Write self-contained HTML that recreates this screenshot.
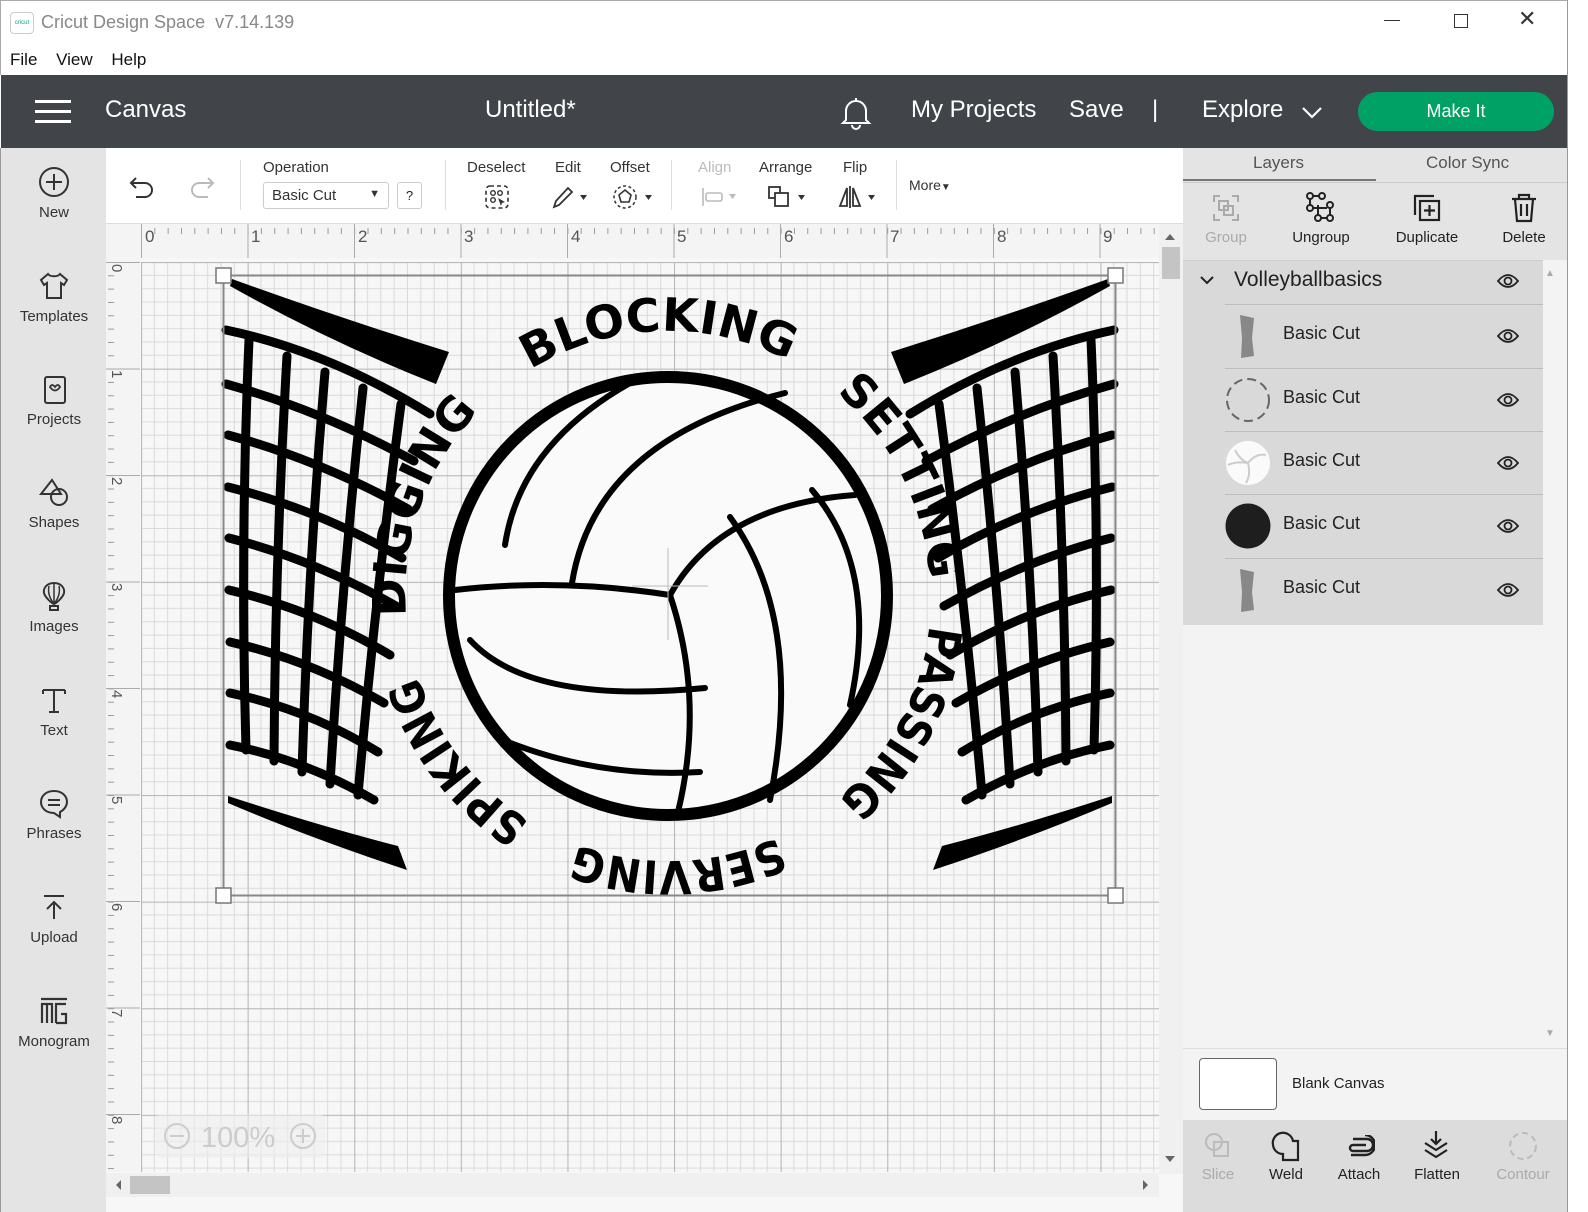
<!DOCTYPE html>
<html><head><meta charset="utf-8"><style>
*{margin:0;padding:0;box-sizing:border-box}
body{width:1588px;height:1212px;background:#fff;font-family:"Liberation Sans",sans-serif;position:relative;overflow:hidden;color:#222}
.abs{position:absolute}
.side{left:0;top:148px;width:106px;height:1064px;background:#e4e4e4;border-left:1px solid #999}
.si{position:absolute;left:0;width:106px;text-align:center;font-size:15px;color:#333}
.si svg{display:block;margin:0 auto 6px}
.tb{left:106px;top:148px;width:1077px;height:76px;background:#fff}
.tl{position:absolute;font-size:15px;color:#333}
.rp{left:1183px;top:148px;width:384px;height:1064px;background:#f3f3f3}
.lrow{position:absolute;left:42px;width:318px;height:63px;border-top:1px solid #bdbdbd}
.lrow span{position:absolute;left:58px;top:18px;font-size:18px;color:#222}
.eye{position:absolute;left:272px}
.bt{position:absolute;text-align:center;font-size:15px;width:80px}
</style></head><body>
<div class="abs" style="left:0;top:0;width:1568px;height:75px;border:1px solid #aaa;border-bottom:none;background:#fff"></div>
<div class="abs" style="left:10px;top:12px;width:24px;height:22px;border:1px solid #ccc;border-radius:4px;font-size:6px;color:#0a8;text-align:center;line-height:20px">cricut</div>
<div class="abs" style="left:41px;top:12px;font-size:18px;color:#888">Cricut Design Space&nbsp; v7.14.139</div>
<div class="abs" style="left:1384px;top:20px;width:16px;height:1px;background:#333"></div>
<div class="abs" style="left:1454px;top:14px;width:14px;height:14px;border:1px solid #333"></div>
<div class="abs" style="left:1518px;top:6px;font-size:22px;color:#333">✕</div>
<div class="abs" style="left:10px;top:50px;font-size:17px;color:#111;word-spacing:14px">File View Help</div>
<div class="abs" style="left:1px;top:75px;width:1566px;height:73px;background:#414549"></div>
<div class="abs" style="left:35px;top:100px;width:36px;height:3px;background:#fff;box-shadow:0 10px 0 #fff,0 20px 0 #fff"></div>
<div class="abs" style="left:105px;top:96px;font-size:24px;color:#fff">Canvas</div>
<div class="abs" style="left:485px;top:96px;font-size:24px;color:#fff">Untitled*</div>
<svg class="abs" style="left:840px;top:96px" width="32" height="34" viewBox="0 0 32 34"><path d="M6 24V15a10 10 0 0 1 20 0v9l3 3H3z M12 29a4 4 0 0 0 8 0" fill="none" stroke="#fff" stroke-width="2"/><path d="M16 2v3" stroke="#fff" stroke-width="2"/></svg>
<div class="abs" style="left:911px;top:96px;font-size:24px;color:#fff">My Projects</div>
<div class="abs" style="left:1069px;top:96px;font-size:24px;color:#fff">Save</div>
<div class="abs" style="left:1152px;top:96px;font-size:24px;color:#fff">|</div>
<div class="abs" style="left:1202px;top:96px;font-size:24px;color:#fff">Explore</div>
<svg class="abs" style="left:1300px;top:104px" width="24" height="16"><path d="M3 4l9 9 9-9" fill="none" stroke="#fff" stroke-width="2.2"/></svg>
<div class="abs" style="left:1358px;top:92px;width:196px;height:39px;background:#00a164;border-radius:20px;color:#fff;font-size:18px;text-align:center;line-height:38px">Make It</div>
<div class="abs side">
<div class="si" style="top:18px"><svg width="32" height="32"><circle cx="16" cy="16" r="14" fill="none" stroke="#333" stroke-width="2"/><path d="M16 8v16M8 16h16" stroke="#333" stroke-width="2"/></svg>New</div>
<div class="si" style="top:122px"><svg width="32" height="32"><path d="M10 4l-7 6 3 5 3-2v15h14V13l3 2 3-5-7-6c-2 3-10 3-12 0z" fill="none" stroke="#333" stroke-width="2"/></svg>Templates</div>
<div class="si" style="top:225px"><svg width="32" height="32"><rect x="7" y="4" width="20" height="26" rx="2" fill="none" stroke="#333" stroke-width="2"/><path d="M12 14q5 7 10 0q-2-4-5 0q-3-4-5 0z" fill="none" stroke="#333" stroke-width="1.8"/></svg>Projects</div>
<div class="si" style="top:328px"><svg width="32" height="32"><path d="M14 4L3 18h20z" fill="none" stroke="#333" stroke-width="2"/><circle cx="21" cy="21" r="8" fill="none" stroke="#333" stroke-width="2"/></svg>Shapes</div>
<div class="si" style="top:432px"><svg width="32" height="32"><path d="M16 3c-7 0-11 5-10 10 1 4 7 10 10 11 3-1 9-7 10-11 1-5-3-10-10-10zM12 26h8v4h-8z" fill="none" stroke="#333" stroke-width="2"/><path d="M16 4v20M11 6q-2 9 5 18M21 6q2 9-5 18" fill="none" stroke="#333" stroke-width="1.5"/></svg>Images</div>
<div class="si" style="top:536px"><svg width="32" height="32"><path d="M5 6h22M16 6v22M11 28h10M5 6v4M27 6v4" stroke="#333" stroke-width="2" fill="none"/></svg>Text</div>
<div class="si" style="top:639px"><svg width="32" height="32"><path d="M16 4C8 4 3 9 3 15s5 11 13 11l6 4v-5c4-2 7-6 7-10 0-6-5-11-13-11z" fill="none" stroke="#333" stroke-width="2"/><path d="M10 13h12M10 18h12" stroke="#333" stroke-width="2"/></svg>Phrases</div>
<div class="si" style="top:743px"><svg width="32" height="32"><path d="M6 5h20M16 28V11M9 18l7-7 7 7" fill="none" stroke="#333" stroke-width="2"/></svg>Upload</div>
<div class="si" style="top:847px"><svg width="32" height="32"><path d="M3 4h26M4 28V9h10v19M9 9v19M18 28V9h10M18 28h10v-9h-5" fill="none" stroke="#333" stroke-width="2.2"/></svg>Monogram</div>
</div>
<div class="abs tb">
<svg class="abs" style="left:22px;top:26px" width="30" height="26"><path d="M8 4L3 9l5 5M3 9h14a7 7 0 0 1 0 14H8" fill="none" stroke="#333" stroke-width="2"/></svg>
<svg class="abs" style="left:80px;top:26px" width="30" height="26"><path d="M22 4l5 5-5 5M27 9H13a7 7 0 0 0 0 14h9" fill="none" stroke="#bbb" stroke-width="2"/></svg>
<div class="abs" style="left:134px;top:12px;width:1px;height:50px;background:#ddd"></div>
<div class="tl" style="left:157px;top:11px">Operation</div>
<div class="abs" style="left:157px;top:34px;width:126px;height:27px;border:1px solid #ccc;border-radius:3px;font-size:15px;padding:4px 8px;color:#333">Basic Cut<span style="position:absolute;right:8px;top:5px;font-size:11px">▼</span></div>
<div class="abs" style="left:291px;top:34px;width:25px;height:27px;border:1px solid #ccc;border-radius:3px;font-size:13px;text-align:center;line-height:25px">?</div>
<div class="abs" style="left:339px;top:12px;width:1px;height:50px;background:#ddd"></div>
<div class="tl" style="left:361px;top:11px">Deselect</div>
<svg class="abs" style="left:378px;top:36px" width="26" height="26"><rect x="2" y="2" width="22" height="22" rx="4" fill="none" stroke="#333" stroke-width="1.6" stroke-dasharray="4 3"/><circle cx="9" cy="9" r="2.3" fill="none" stroke="#333" stroke-width="1.4"/><circle cx="16" cy="9" r="2.3" fill="none" stroke="#333" stroke-width="1.4"/><circle cx="9" cy="16" r="2.3" fill="none" stroke="#333" stroke-width="1.4"/><path d="M14 14l7 4-3 1-1 3z" fill="#333"/></svg>
<div class="tl" style="left:449px;top:11px">Edit</div>
<svg class="abs" style="left:444px;top:36px" width="40" height="26"><path d="M4 23l2-6L18 4l4 4L9 21z" fill="none" stroke="#333" stroke-width="1.8"/><path d="M30 11h7l-3.5 5z" fill="#333"/></svg>
<div class="tl" style="left:504px;top:11px">Offset</div>
<svg class="abs" style="left:506px;top:36px" width="42" height="26"><circle cx="13" cy="13" r="11" fill="none" stroke="#333" stroke-width="1.5" stroke-dasharray="3 2.5"/><path d="M13 6l6 5-2 7H9l-2-7z" fill="none" stroke="#333" stroke-width="1.6"/><path d="M33 11h7l-3.5 5z" fill="#333"/></svg>
<div class="abs" style="left:565px;top:12px;width:1px;height:50px;background:#ddd"></div>
<div class="tl" style="left:592px;top:11px;color:#bbb">Align</div>
<svg class="abs" style="left:594px;top:38px" width="40" height="22"><path d="M3 2v18" stroke="#bbb" stroke-width="1.6"/><rect x="6" y="7" width="16" height="8" rx="2" fill="none" stroke="#bbb" stroke-width="1.6"/><path d="M29 8h7l-3.5 5z" fill="#bbb"/></svg>
<div class="tl" style="left:653px;top:11px">Arrange</div>
<svg class="abs" style="left:660px;top:36px" width="42" height="26"><rect x="3" y="3" width="11" height="11" fill="none" stroke="#333" stroke-width="1.8"/><rect x="9" y="9" width="13" height="13" fill="#fff" stroke="#333" stroke-width="1.8"/><path d="M32 11h7l-3.5 5z" fill="#333"/></svg>
<div class="tl" style="left:737px;top:11px">Flip</div>
<svg class="abs" style="left:732px;top:36px" width="42" height="26"><path d="M12 2v22M9 4L2 22h7zM15 4l7 18h-7z" fill="none" stroke="#333" stroke-width="1.8"/><path d="M30 11h7l-3.5 5z" fill="#333"/></svg>
<div class="abs" style="left:790px;top:12px;width:1px;height:50px;background:#ddd"></div>
<div class="tl" style="left:803px;top:29px;font-size:14px">More<span style="font-size:10px">▼</span></div>
</div>
<div class="abs" style="left:106px;top:223px;width:1077px;height:1px;background:#ddd"></div>
<svg class="abs" style="left:106px;top:224px" width="1077" height="988" viewBox="106 224 1077 988">
<defs>
<pattern id="g" x="141" y="262" width="106.6" height="106.6" patternUnits="userSpaceOnUse">
<path d="M13.3 0V106.6M26.6 0V106.6M40 0V106.6M53.3 0V106.6M66.6 0V106.6M80 0V106.6M93.3 0V106.6M0 13.3H106.6M0 26.6H106.6M0 40H106.6M0 53.3H106.6M0 66.6H106.6M0 80H106.6M0 93.3H106.6" stroke="#dadada" stroke-width="1"/>
<path d="M0.5 0V106.6M0 0.5H106.6" stroke="#b9b9b9" stroke-width="1.2"/>
</pattern>
<pattern id="rt" x="141" y="0" width="13.325" height="40" patternUnits="userSpaceOnUse"><path d="M0.5 28v6" stroke="#999"/></pattern>
<pattern id="rl" x="0" y="262" width="40" height="13.325" patternUnits="userSpaceOnUse"><path d="M28 0.5h6" stroke="#999"/></pattern>
<g id="net">
<path d="M232 279 Q340 318 449 352 L436 384 Q330 342 230 286 Z"/>
<path d="M228 796 Q320 826 398 846 L407 870 Q310 838 228 803 Z"/>
<g fill="none" stroke="#000" stroke-width="9" stroke-linecap="round">
<path d="M226 330 Q330 352 430 414"/>
<path d="M226 384 Q320 410 414 461"/>
<path d="M228 435 Q320 460 408 509"/>
<path d="M228 487 Q320 510 402 558"/>
<path d="M229 538 Q315 560 396 606"/>
<path d="M229 590 Q315 610 390 655"/>
<path d="M230 642 Q310 660 384 703"/>
<path d="M230 693 Q310 710 378 752"/>
<path d="M230 745 Q305 760 374 800"/>
<path d="M249 340 Q240 545 246 750"/>
<path d="M287 356 Q275 560 274 761"/>
<path d="M325 372 Q308 570 302 772"/>
<path d="M363 388 Q342 580 330 784"/>
<path d="M401 404 Q375 600 358 795"/>
</g>
</g>
</defs>
<rect x="106" y="224" width="1077" height="988" fill="#f7f7f7"/>
<rect x="141" y="262" width="1018" height="910" fill="url(#g)"/>
<rect x="106" y="224" width="1053" height="34" fill="#f4f4f4"/>
<rect x="141" y="224" width="1018" height="34" fill="url(#rt)"/>
<rect x="106" y="258" width="34" height="914" fill="#f4f4f4"/>
<rect x="106" y="262" width="34" height="910" fill="url(#rl)"/>
<g stroke="#aaa"><path d="M141.5 224v34M248 224v34M354.5 224v34M461 224v34M567.5 224v34M674 224v34M780.5 224v34M887 224v34M993.5 224v34M1100 224v34"/>
<path d="M106 262.5h34M106 369h34M106 475.5h34M106 582h34M106 688.5h34M106 795h34M106 901.5h34M106 1008h34M106 1114.5h34"/></g>
<g font-size="17" fill="#555" font-family="Liberation Sans"><text x="145" y="242">0</text><text x="251" y="242">1</text><text x="358" y="242">2</text><text x="464" y="242">3</text><text x="571" y="242">4</text><text x="677" y="242">5</text><text x="784" y="242">6</text><text x="890" y="242">7</text><text x="997" y="242">8</text><text x="1103" y="242">9</text></g>
<g font-size="15" fill="#555" font-family="Liberation Sans">
<text transform="translate(112,264) rotate(90)">0</text><text transform="translate(112,370) rotate(90)">1</text><text transform="translate(112,477) rotate(90)">2</text><text transform="translate(112,583) rotate(90)">3</text><text transform="translate(112,690) rotate(90)">4</text><text transform="translate(112,796) rotate(90)">5</text><text transform="translate(112,903) rotate(90)">6</text><text transform="translate(112,1009) rotate(90)">7</text><text transform="translate(112,1116) rotate(90)">8</text></g>
<use href="#net"/>
<use href="#net" transform="translate(1340,0) scale(-1,1)"/>
<circle cx="668" cy="596" r="219" fill="#fafafa" stroke="#000" stroke-width="12"/>
<g fill="none" stroke="#000" stroke-width="6" stroke-linecap="round">
<path d="M670 595 Q720 505 855 495"/>
<path d="M670 595 Q705 700 678 812"/>
<path d="M670 595 Q560 578 455 590"/>
<path d="M572 583 Q595 440 785 393"/>
<path d="M505 545 Q520 445 630 383"/>
<path d="M730 517 Q805 620 770 800"/>
<path d="M812 490 Q880 570 850 705"/>
<path d="M470 640 Q530 705 705 688"/>
<path d="M508 742 Q600 778 700 772"/>
</g>
<path d="M668 548v92M632 586h76" stroke="#bbb" stroke-width="1"/>
<path id="arc" d="M410 641.5 A262 262 0 1 1 926 550.5 A262 262 0 1 1 410 641.5" fill="none"/>
<g font-family="DejaVu Sans" font-weight="bold" font-size="46" fill="#000" text-anchor="middle">
<text><textPath href="#arc" startOffset="8.3%" textLength="224" lengthAdjust="spacingAndGlyphs">DIGGING</textPath></text>
<text><textPath href="#arc" startOffset="27.2%" textLength="270" lengthAdjust="spacingAndGlyphs">BLOCKING</textPath></text>
<text><textPath href="#arc" startOffset="45.3%" textLength="215" lengthAdjust="spacingAndGlyphs">SETTING</textPath></text>
<text><textPath href="#arc" startOffset="60.6%" textLength="201" lengthAdjust="spacingAndGlyphs">PASSING</textPath></text>
<text><textPath href="#arc" startOffset="77.2%" textLength="206" lengthAdjust="spacingAndGlyphs">SERVING</textPath></text>
<text><textPath href="#arc" startOffset="92.2%" textLength="187" lengthAdjust="spacingAndGlyphs">SPIKING</textPath></text>
</g>
<rect x="223.5" y="275.5" width="892" height="620" fill="none" stroke="#888" stroke-width="2"/>
<g fill="#fff" stroke="#777" stroke-width="1.5"><rect x="216" y="268" width="15" height="15"/><rect x="1108" y="268" width="15" height="15"/><rect x="216" y="888" width="15" height="15"/><rect x="1108" y="888" width="15" height="15"/></g>
<rect x="155" y="1114" width="170" height="44" rx="6" fill="#eee" opacity=".6"/>
<g stroke="#ccc" stroke-width="2" fill="none"><circle cx="177" cy="1136" r="12"/><circle cx="303" cy="1136" r="12"/><path d="M170 1136h14M296 1136h14M303 1129v14"/></g>
<text x="201" y="1147" font-size="29" fill="#ccc" font-family="Liberation Sans">100%</text>
<rect x="1159" y="224" width="24" height="950" fill="#f0f0f0"/>
<rect x="1162" y="247" width="18" height="32" fill="#c4c4c4"/>
<path d="M1165 240l5-6 5 6z M1165 1156l5 6 5-6z" fill="#666"/>
<rect x="106" y="1173" width="1053" height="24" fill="#f0f0f0"/>
<rect x="130" y="1176" width="40" height="18" fill="#c4c4c4"/>
<path d="M121 1180l-5 5 5 5z M1143 1180l5 5-5 5z" fill="#666"/>
</svg>
<div class="abs rp">
<div class="abs" style="left:0;top:0;width:384px;height:34px;background:#e4e4e4"></div>
<div class="abs" style="left:70px;top:5px;font-size:17px;color:#555">Layers</div>
<div class="abs" style="left:243px;top:5px;font-size:17px;color:#555">Color Sync</div>
<div class="abs" style="left:0;top:31px;width:193px;height:2px;background:#777"></div>
<div class="abs" style="left:0;top:34px;width:384px;height:78px;background:#e4e4e4;border-top:1px solid #ccc"></div>
<svg class="abs" style="left:28px;top:45px" width="30" height="30"><path d="M3 9V3h6M21 3h6v6M27 21v6h-6M9 27H3v-6" fill="none" stroke="#aaa" stroke-width="2"/><rect x="8" y="8" width="9" height="9" fill="none" stroke="#aaa" stroke-width="2"/><rect x="13" y="13" width="9" height="9" fill="none" stroke="#aaa" stroke-width="2"/></svg>
<div class="bt" style="left:3px;top:81px;color:#aaa">Group</div>
<svg class="abs" style="left:121px;top:43px" width="32" height="32"><g fill="none" stroke="#222" stroke-width="2"><circle cx="6" cy="5" r="3"/><circle cx="18" cy="5" r="3"/><circle cx="6" cy="17" r="3"/><circle cx="26" cy="14" r="3"/><circle cx="14" cy="27" r="3"/><circle cx="26" cy="27" r="3"/><path d="M9 5h6M6 8v6M9 17h14M14 14v10M17 27h6M26 17v7"/></g></svg>
<div class="bt" style="left:98px;top:81px">Ungroup</div>
<svg class="abs" style="left:229px;top:45px" width="30" height="30"><path d="M3 22V3h19" fill="none" stroke="#222" stroke-width="2.2"/><rect x="8" y="8" width="19" height="19" fill="none" stroke="#222" stroke-width="2.2"/><path d="M17.5 12v11M12 17.5h11" stroke="#222" stroke-width="2.2"/></svg>
<div class="bt" style="left:204px;top:81px">Duplicate</div>
<svg class="abs" style="left:326px;top:44px" width="30" height="32"><path d="M3 7h24M10 7V3h10v4M6 7l2 22h14l2-22M12 12v12M18 12v12" fill="none" stroke="#222" stroke-width="2.2"/></svg>
<div class="bt" style="left:301px;top:81px">Delete</div>
<div class="abs" style="left:0;top:112px;width:360px;height:365px;background:#d9d9d9;border-top:1px solid #ccc"></div>
<svg class="abs" style="left:16px;top:127px" width="16" height="12"><path d="M2 2l6 6 6-6" fill="none" stroke="#222" stroke-width="2"/></svg>
<div class="abs" style="left:51px;top:120px;font-size:21px;color:#222">Volleyballbasics</div>
<svg class="abs eye" style="left:314px;top:125px" width="22" height="16"><path d="M1 8q10-12 20 0q-10 12-20 0z" fill="none" stroke="#222" stroke-width="1.8"/><circle cx="11" cy="8" r="3.5" fill="none" stroke="#222" stroke-width="1.8"/></svg>
<div class="lrow" style="top:156px"><svg class="abs" style="left:12px;top:8px" width="20" height="46"><path d="M3 2l14 3-2 20 2 18-13 2 1-20z" fill="#888"/></svg><span>Basic Cut</span><svg class="eye" style="top:23px" width="22" height="16"><path d="M1 8q10-12 20 0q-10 12-20 0z" fill="none" stroke="#222" stroke-width="1.8"/><circle cx="11" cy="8" r="3.5" fill="none" stroke="#222" stroke-width="1.8"/></svg></div>
<div class="lrow" style="top:220px"><svg class="abs" style="left:0;top:8px" width="46" height="46"><circle cx="23" cy="23" r="21" fill="none" stroke="#666" stroke-width="2" stroke-dasharray="9 5"/></svg><span>Basic Cut</span><svg class="eye" style="top:23px" width="22" height="16"><path d="M1 8q10-12 20 0q-10 12-20 0z" fill="none" stroke="#222" stroke-width="1.8"/><circle cx="11" cy="8" r="3.5" fill="none" stroke="#222" stroke-width="1.8"/></svg></div>
<div class="lrow" style="top:283px"><svg class="abs" style="left:0;top:8px" width="46" height="46"><circle cx="23" cy="23" r="22" fill="#fafafa"/><path d="M23 23q8-10 18-8M23 23q3 12-2 20M23 23q-12-2-20 2M10 10q5 10 13 13" fill="none" stroke="#ccc" stroke-width="2"/></svg><span>Basic Cut</span><svg class="eye" style="top:23px" width="22" height="16"><path d="M1 8q10-12 20 0q-10 12-20 0z" fill="none" stroke="#222" stroke-width="1.8"/><circle cx="11" cy="8" r="3.5" fill="none" stroke="#222" stroke-width="1.8"/></svg></div>
<div class="lrow" style="top:346px"><svg class="abs" style="left:0;top:8px" width="46" height="46"><circle cx="23" cy="23" r="22.5" fill="#1e1e1e"/></svg><span>Basic Cut</span><svg class="eye" style="top:23px" width="22" height="16"><path d="M1 8q10-12 20 0q-10 12-20 0z" fill="none" stroke="#222" stroke-width="1.8"/><circle cx="11" cy="8" r="3.5" fill="none" stroke="#222" stroke-width="1.8"/></svg></div>
<div class="lrow" style="top:410px;height:67px"><svg class="abs" style="left:12px;top:8px" width="20" height="46"><path d="M3 2l14 3-2 20 2 18-13 2 1-20z" fill="#888"/></svg><span>Basic Cut</span><svg class="eye" style="top:23px" width="22" height="16"><path d="M1 8q10-12 20 0q-10 12-20 0z" fill="none" stroke="#222" stroke-width="1.8"/><circle cx="11" cy="8" r="3.5" fill="none" stroke="#222" stroke-width="1.8"/></svg></div>
<div class="abs" style="left:362px;top:120px;font-size:10px;color:#aaa">▲</div>
<div class="abs" style="left:362px;top:880px;font-size:10px;color:#aaa">▼</div>
<div class="abs" style="left:0;top:900px;width:384px;height:1px;background:#ddd"></div>
<div class="abs" style="left:16px;top:910px;width:78px;height:52px;background:#fff;border:1.5px solid #666;border-radius:4px"></div>
<div class="abs" style="left:109px;top:927px;font-size:15px;color:#222">Blank Canvas</div>
<div class="abs" style="left:0;top:972px;width:384px;height:92px;background:#dcdcdc"></div>
<svg class="abs" style="left:20px;top:983px" width="30" height="30"><circle cx="11" cy="11" r="8" fill="none" stroke="#bbb" stroke-width="2"/><path d="M11 11h14v14H11z" fill="none" stroke="#bbb" stroke-width="2"/></svg>
<div class="bt" style="left:-5px;top:1018px;color:#aaa">Slice</div>
<svg class="abs" style="left:86px;top:983px" width="32" height="32"><path d="M4 14a10 10 0 0 1 20-4h5v19H14v-6a10 10 0 0 1-10-9z" fill="none" stroke="#222" stroke-width="2.2"/></svg>
<div class="bt" style="left:63px;top:1018px">Weld</div>
<svg class="abs" style="left:160px;top:987px" width="32" height="24"><path d="M10 4h14a6 6 0 0 1 0 12H10a3 3 0 0 1 0-6h13M8 20h14a10 10 0 0 0 0-20" fill="none" stroke="#222" stroke-width="2.4"/></svg>
<div class="bt" style="left:136px;top:1018px">Attach</div>
<svg class="abs" style="left:238px;top:981px" width="30" height="32"><path d="M15 2v13M10 10l5 5 5-5M4 14l11 7 11-7M4 21l11 7 11-7" fill="none" stroke="#222" stroke-width="2.2"/></svg>
<div class="bt" style="left:214px;top:1018px">Flatten</div>
<svg class="abs" style="left:324px;top:982px" width="32" height="32"><circle cx="16" cy="16" r="13" fill="none" stroke="#bbb" stroke-width="2" stroke-dasharray="6 4"/></svg>
<div class="bt" style="left:300px;top:1018px;color:#aaa">Contour</div>
</div>
<div class="abs" style="left:1567px;top:0;width:1px;height:1212px;background:#999"></div>
</body></html>
